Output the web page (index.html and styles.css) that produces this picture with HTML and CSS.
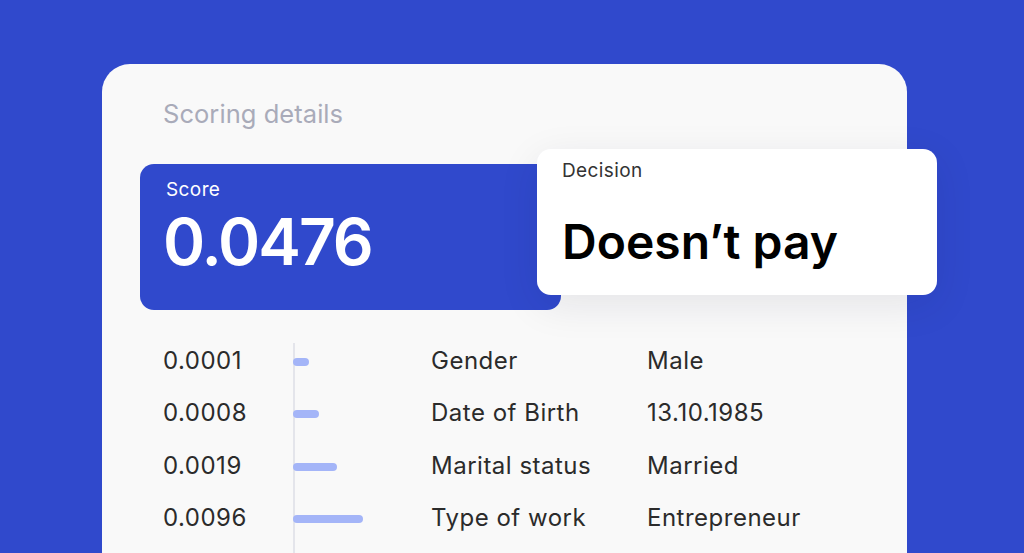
FILE: index.html
```html
<!DOCTYPE html>
<html>
<head>
<meta charset="utf-8">
<link rel="stylesheet" href="styles.css">
</head>
<body>
<div class="card">
  <div class="title">Scoring details</div>
  <div class="top-row">
    <div class="score-box">
      <div class="score-label">Score</div>
      <div class="score-value">0.0476</div>
    </div>
    <div class="decision">
      <div class="decision-label">Decision</div>
      <div class="decision-value">Doesn’t pay</div>
    </div>
  </div>
  <div class="table">
    <div class="row first">
      <div class="num">0.0001</div>
      <div class="bar-cell"><span class="bar" style="width:16px"></span></div>
      <div class="label">Gender</div>
      <div class="value">Male</div>
    </div>
    <div class="row">
      <div class="num">0.0008</div>
      <div class="bar-cell"><span class="bar" style="width:26px"></span></div>
      <div class="label">Date of Birth</div>
      <div class="value">13.10.1985</div>
    </div>
    <div class="row">
      <div class="num">0.0019</div>
      <div class="bar-cell"><span class="bar" style="width:44px"></span></div>
      <div class="label">Marital status</div>
      <div class="value">Married</div>
    </div>
    <div class="row">
      <div class="num">0.0096</div>
      <div class="bar-cell"><span class="bar" style="width:70px"></span></div>
      <div class="label">Type of work</div>
      <div class="value">Entrepreneur</div>
    </div>
    <div class="row filler">
      <div class="num"></div>
      <div class="bar-cell"></div>
      <div class="label"></div>
      <div class="value"></div>
    </div>
  </div>
</div>
</body>
</html>
```
FILE: styles.css
```css
html, body {
  margin: 0;
  padding: 0;
  height: 553px;
  overflow: hidden;
}
body {
  background: #3049cc;
  font-family: Inter, "Noto Sans", sans-serif;
}
.card {
  margin: 64px 0 0 102px;
  width: 805px;
  height: 489px;
  box-sizing: border-box;
  padding: 35px 0 0 61px;
  background: #f9f9f9;
  border-radius: 28px 28px 0 0;
  display: flex;
  flex-direction: column;
}
.title {
  font-size: 25.5px;
  line-height: 30px;
  color: #a9abb9;
  font-weight: 400;
  letter-spacing: 0.05px;
}
.top-row {
  display: flex;
  align-items: flex-start;
  margin: 34.5px 0 0 -23px;
}
.score-box {
  width: 421px;
  height: 146px;
  box-sizing: border-box;
  padding: 15px 0 0 26px;
  background: #3049cc;
  border-radius: 14px;
  color: #fff;
  flex: none;
}
.score-label {
  font-size: 19px;
  line-height: 22px;
  letter-spacing: 0.4px;
}
.score-value {
  margin-top: 6px;
  margin-left: -3px;
  font-size: 64px;
  line-height: 70px;
  font-weight: 600;
  letter-spacing: -2px;
}
.decision {
  flex: none;
  width: 400px;
  height: 146px;
  box-sizing: border-box;
  margin: -15px 0 0 -24px;
  padding: 11px 0 0 25px;
  background: #fff;
  border-radius: 14px;
  box-shadow: 0 10px 40px rgba(20, 24, 60, 0.09);
}
.decision-label {
  font-size: 19px;
  line-height: 22px;
  color: #333;
  letter-spacing: 0.4px;
}
.decision-value {
  margin-top: 32px;
  font-size: 48px;
  line-height: 56px;
  font-weight: 600;
  color: #000;
}
.table {
  margin-top: 25px;
  flex: 1;
  display: flex;
  flex-direction: column;
}
.row {
  display: grid;
  grid-template-columns: 130px 138px 216px 1fr;
  height: 52.5px;
  flex: none;
  align-items: center;
  font-size: 24px;
  line-height: 52.5px;
  letter-spacing: 0.5px;
  color: #2b2b2b;
}
.row.filler {
  flex: 1;
  height: auto;
}
.bar-cell {
  height: 100%;
  display: flex;
  align-items: center;
  background-image: linear-gradient(#e4e5eb, #e4e5eb);
  background-repeat: no-repeat;
  background-size: 2px 100%;
  background-position: 0 0;
}
.first .bar-cell {
  background-position: 0 8px;
}
.bar {
  display: block;
  height: 8px;
  border-radius: 4px;
  background: #a4b5f8;
  margin-top: 2px;
}
```
